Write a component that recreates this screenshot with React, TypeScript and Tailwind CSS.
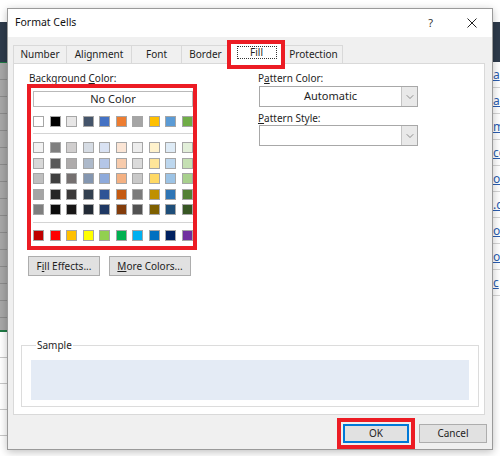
import { ChevronDown } from 'lucide-react';

const topRow = [
  'bg-[#ffffff]', 'bg-[#000000]', 'bg-[#e7e6e6]', 'bg-[#44546a]', 'bg-[#4472c4]',
  'bg-[#ed7d31]', 'bg-[#a5a5a5]', 'bg-[#ffc000]', 'bg-[#5b9bd5]', 'bg-[#70ad47]',
];

const shadeRows = [
  ['bg-[#f2f2f2]', 'bg-[#7f7f7f]', 'bg-[#d0cece]', 'bg-[#d6dce4]', 'bg-[#d9e2f3]', 'bg-[#fbe5d5]', 'bg-[#ededed]', 'bg-[#fff2cc]', 'bg-[#deebf6]', 'bg-[#e2efd9]'],
  ['bg-[#d8d8d8]', 'bg-[#595959]', 'bg-[#aeabab]', 'bg-[#adb9ca]', 'bg-[#b4c6e7]', 'bg-[#f7cbac]', 'bg-[#dbdbdb]', 'bg-[#fee599]', 'bg-[#bdd7ee]', 'bg-[#c5e0b3]'],
  ['bg-[#bfbfbf]', 'bg-[#3f3f3f]', 'bg-[#757070]', 'bg-[#8496b0]', 'bg-[#8eaadb]', 'bg-[#f4b183]', 'bg-[#c9c9c9]', 'bg-[#ffd965]', 'bg-[#9cc3e5]', 'bg-[#a8d08d]'],
  ['bg-[#a5a5a5]', 'bg-[#262626]', 'bg-[#3a3838]', 'bg-[#323f4f]', 'bg-[#2f5496]', 'bg-[#c55a11]', 'bg-[#7b7b7b]', 'bg-[#bf9000]', 'bg-[#2e75b5]', 'bg-[#538135]'],
  ['bg-[#7f7f7f]', 'bg-[#0c0c0c]', 'bg-[#171616]', 'bg-[#222a35]', 'bg-[#1f3864]', 'bg-[#833c0b]', 'bg-[#525252]', 'bg-[#7f6000]', 'bg-[#1e4e79]', 'bg-[#375623]'],
];

const standardRow = [
  'bg-[#c00000]', 'bg-[#ff0000]', 'bg-[#ffc000]', 'bg-[#ffff00]', 'bg-[#92d050]',
  'bg-[#00b050]', 'bg-[#00b0f0]', 'bg-[#0070c0]', 'bg-[#002060]', 'bg-[#7030a0]',
];

const tabs = [
  { label: 'Number', width: 'w-[53px]' },
  { label: 'Alignment', width: 'w-[65px]' },
  { label: 'Font', width: 'w-[50px]' },
  { label: 'Border', width: 'w-[48px]' },
  { label: 'Fill', width: 'w-[55px]', active: true },
  { label: 'Protection', width: 'w-[59px]' },
];

const links = ['a', 'ar', 'm', 'co', 'o', '.c', 'o', 'o', 'c'];

function SwatchRow({ colors }: { colors: string[] }) {
  return (
    <div className="flex justify-between">
      {colors.map((color, i) => (
        <span key={i} className={`block h-[11px] w-[11px] border border-[#a6a6a6] ${color}`} />
      ))}
    </div>
  );
}

function Dropdown({ value }: { value?: string }) {
  return (
    <div className="flex h-[21px] w-[159px] border border-[#a8a8a8] bg-white">
      <div className="flex flex-1 items-center justify-center text-[11px] text-[#1e1e1e]">{value}</div>
      <div className="flex w-[16px] items-center justify-center border-l border-[#c4c4c4] bg-[#e9e9e9]">
        <ChevronDown size={12} strokeWidth={1.25} className="text-[#555]" />
      </div>
    </div>
  );
}

function Spreadsheet() {
  return (
    <div className="flex h-full flex-col">
      <div className="h-[22px] overflow-hidden bg-white pl-[2px]">
        <p className="-mt-[17px] text-[20px] font-bold leading-none tracking-wide text-[#222]">TYPE OF HEADBOARD</p>
      </div>
      <div className="h-[40px] bg-[#2e3b4b]" />
      <div className="flex flex-1 justify-between">
        <div className="flex w-[7px] flex-col">
          <div className="h-[268px] border-t border-[#1f7a45] bg-[repeating-linear-gradient(to_bottom,#a7a7a7_0px,#a7a7a7_16px,#8c8c8c_16px,#8c8c8c_17px)]" />
          <div className="flex-1 border-t-2 border-[#1f7a45] bg-[repeating-linear-gradient(to_bottom,#ffffff_0px,#ffffff_25px,#c8c8c8_25px,#c8c8c8_26px)]" />
        </div>
        <div className="flex w-[7px] flex-col overflow-hidden bg-white">
          {links.map((t, i) => (
            <div key={i} className="flex h-[26px] items-center border-b border-[#d4d4d4]">
              <span className="text-[12px] text-[#2a5db0] underline">{t}</span>
            </div>
          ))}
        </div>
      </div>
    </div>
  );
}

export default function App() {
  return (
    <div
      className="relative h-[456px] w-[500px] overflow-hidden bg-white text-[10px] text-[#1e1e1e]"
      style={{ fontFamily: '"Noto Sans", sans-serif' }}
    >
      <Spreadsheet />

      <div className="absolute left-[7px] top-[8px] flex h-[442px] w-[486px] flex-col border border-[#9a9a9a] bg-[#f0f0f0] shadow-[0_2px_8px_rgba(0,0,0,0.25)]">
        <div className="flex h-[28px] items-center bg-white pl-[7px] pr-[15px]">
          <span className="text-[10.5px] text-[#111]">Format Cells</span>
          <span className="ml-auto text-[11px] text-[#333]">?</span>
          <svg width="10" height="10" viewBox="0 0 10 10" className="ml-[34px]">
            <path d="M0.5 0.5 L9.5 9.5 M9.5 0.5 L0.5 9.5" stroke="#222" strokeWidth="1" />
          </svg>
        </div>

        <div className="flex h-[26px] items-end pl-[5px]">
          {tabs.map((tab, i) =>
            tab.active ? (
              <div key={tab.label} className={`relative z-10 -mb-px flex h-[22px] ${tab.width} items-start justify-center border-x border-t border-[#d9d9d9] bg-white pt-[3px]`}>
                <span className="flex h-[13px] w-[40px] items-center justify-center border border-dotted border-[#333]">Fill</span>
                <span className="absolute -left-[3px] -right-[2px] -top-[3px] -bottom-[5px] border-4 border-[#ec1c24]" />
              </div>
            ) : (
              <div
                key={tab.label}
                className={`flex h-[18px] ${tab.width} items-center justify-center border-t border-l border-[#d9d9d9] ${i === tabs.length - 1 ? 'border-r' : ''}`}
              >
                {tab.label}
              </div>
            ),
          )}
        </div>

        <div className="ml-[5px] flex h-[352px] w-[472px] flex-col border border-[#d9d9d9] bg-white">
          <div className="flex pl-[15px] pt-[7px]">
            <div className="flex w-[229px] flex-col">
              <p className="h-[14px] leading-[14px]">
                Background <span className="underline">C</span>olor:
              </p>
              <div className="-ml-[2px] -mt-px w-[170px] border-4 border-[#ec1c24] pb-[5px] pl-[2px] pt-[3px]">
                <div className="flex h-[16px] items-center justify-center border border-[#b9b9b9] bg-white text-[11px]">No Color</div>
                <div className="mt-[9px]">
                  <SwatchRow colors={topRow} />
                </div>
                <div className="mt-[6px] h-px bg-[#d4d4d4]" />
                <div className="mt-[8px] flex flex-col gap-[4.5px]">
                  {shadeRows.map((row, i) => (
                    <SwatchRow key={i} colors={row} />
                  ))}
                </div>
                <div className="mt-[7px] h-px bg-[#d4d4d4]" />
                <div className="mt-[7px]">
                  <SwatchRow colors={standardRow} />
                </div>
              </div>
              <div className="-ml-px mt-[6px] flex gap-[9px]">
                <button type="button" className="h-[20px] w-[72px] border border-[#adadad] bg-[#e1e1e1]">
                  F<span className="underline">i</span>ll Effects...
                </button>
                <button type="button" className="h-[20px] w-[82px] border border-[#adadad] bg-[#e1e1e1]">
                  <span className="underline">M</span>ore Colors...
                </button>
              </div>
            </div>

            <div className="flex flex-col">
              <p className="h-[14px] leading-[14px]">
                P<span className="underline">a</span>ttern Color:
              </p>
              <div className="ml-px mt-px">
                <Dropdown value="Automatic" />
              </div>
              <p className="mt-[4px] h-[14px] leading-[14px]">
                <span className="underline">P</span>attern Style:
              </p>
              <div className="ml-px">
                <Dropdown />
              </div>
            </div>
          </div>

          <div className="flex-1" />

          <fieldset className="mb-[7px] ml-[7px] mr-[5px] border border-[#dcdcdc] px-[9px] pb-[6px] pt-[9px]">
            <legend className="ml-[5px] px-px leading-[12px]">Sample</legend>
            <div className="h-[40px] bg-[#e4ebf5]" />
          </fieldset>
        </div>

        <div className="flex flex-1 items-start justify-end pr-[5px] pt-[3px]">
          <div className="border-4 border-[#ec1c24] p-[2px]">
            <button type="button" className="h-[19px] w-[66px] border border-[#0078d7] bg-[#e1e1e1] shadow-[inset_0_0_0_1px_#0078d7]">
              OK
            </button>
          </div>
          <button type="button" className="ml-[4px] mt-[6px] h-[19px] w-[68px] border border-[#adadad] bg-[#e1e1e1]">
            Cancel
          </button>
        </div>
      </div>
    </div>
  );
}
